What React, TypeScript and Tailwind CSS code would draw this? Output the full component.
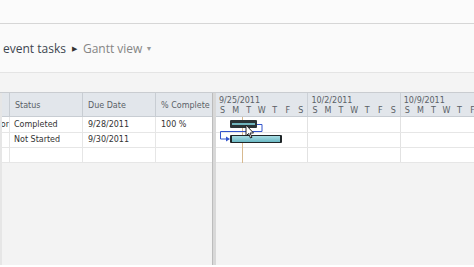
import React from 'react'

const days = ['S', 'M', 'T', 'W', 'T', 'F', 'S']
const weeks = ['9/25/2011', '10/2/2011', '10/9/2011']

const rows = [
  { name: 'Hire vendor', status: 'Completed', due: '9/28/2011', pct: '100 %', h: 'h-[16px]' },
  { name: '', status: 'Not Started', due: '9/30/2011', pct: '', h: 'h-[15px]' },
  { name: '', status: '', due: '', pct: '', h: 'h-[15px]' },
]

function Cursor() {
  return (
    <svg width="10" height="15" viewBox="0 0 10 15" className="absolute left-[29px] top-[7px]">
      <path d="M1 1 L1 12 L3.5 9.5 L5.5 14 L7 13.3 L5 9 L8.5 9 Z" fill="#fff" stroke="#222" strokeWidth="1" strokeLinejoin="round" />
    </svg>
  )
}

export default function App() {
  return (
    <div className="w-[474px] h-[267px] flex bg-white overflow-hidden" style={{ fontFamily: '"DejaVu Sans", Verdana, sans-serif' }}>
      <div className="flex-1 flex flex-col">
        {/* top strip */}
        <div className="h-[24px] bg-[#fbfbfb] border-b border-[#d6d6d6]" />

        {/* breadcrumb */}
        <div className="h-[49px] bg-[#fafafa] border-b border-[#e4e4e4] flex items-center pl-[3px] pt-[2px] text-[12px]" style={{ fontFamily: '"Open Sans", "Noto Sans", sans-serif' }}>
          <span className="text-[#3d4650]">event tasks</span>
          <span className="mx-[6px] text-[7px] text-[#333]">▶</span>
          <span className="text-[#858585]">Gantt view</span>
          <span className="ml-[3px] text-[7px] text-[#999]">▼</span>
        </div>

        {/* toolbar band */}
        <div className="h-[19px] bg-[#f4f4f4]" />

        {/* grid + gantt */}
        <div className="flex-1 flex border-t border-[#c9ccd0] text-[8px] pb-[2px] bg-white">
          {/* left grid */}
          <div className="w-[212px] flex flex-col bg-[#f3f3f3] border-l-[2px] border-[#e6e6e6]">
            <div className="h-[24px] flex bg-[#e2e6eb] border-b border-[#c8cdd3] text-[#5a5f66]">
              <div className="w-[8px] border-r border-[#c8cdd3]" />
              <div className="w-[73px] border-r border-[#c8cdd3] flex items-center pl-[5px] pt-[2px]">Status</div>
              <div className="w-[73px] border-r border-[#c8cdd3] flex items-center pl-[5px] pt-[2px]">Due Date</div>
              <div className="flex-1 flex items-center pl-[5px] pt-[2px] whitespace-nowrap overflow-hidden">% Complete</div>
            </div>
            {rows.map((r, i) => (
              <div key={i} className={`${r.h} flex bg-white border-b border-[#e6e6e6] text-[#333]`}>
                <div className="w-[8px] border-r border-[#e6e6e6] flex items-center justify-end overflow-hidden whitespace-nowrap">{r.name}</div>
                <div className="w-[73px] border-r border-[#e6e6e6] flex items-center pl-[4px]">{r.status}</div>
                <div className="w-[73px] border-r border-[#e6e6e6] flex items-center pl-[5px]">{r.due}</div>
                <div className="flex-1 flex items-center pl-[5px]">{r.pct}</div>
              </div>
            ))}
          </div>

          {/* splitter */}
          <div className="w-[4px] bg-[#d8d8d8] border-l border-[#bcbcbc]" />

          {/* gantt */}
          <div className="flex-1 flex flex-col bg-[#f3f3f3] border-r border-[#dcdcdc] overflow-hidden">
            <div className="h-[24px] flex flex-col bg-[#e2e6eb] border-b border-[#c8cdd3] text-[#5a5f66]">
              <div className="h-[13px] flex">
                {weeks.map(w => (
                  <div key={w} className="w-[92.4px] shrink-0 pl-[3px] pt-[3px] leading-[9px] border-r border-[#ccd1d7]">{w}</div>
                ))}
              </div>
              <div className="flex-1 flex">
                {weeks.map(w => (
                  <div key={w} className="w-[92.4px] shrink-0 flex border-r border-[#ccd1d7]">
                    {days.map((d, i) => (
                      <div key={i} className="w-[13.2px] text-center text-[8px] leading-[11px]">{d}</div>
                    ))}
                  </div>
                ))}
              </div>
            </div>
            <div className="relative flex flex-col">
              {rows.map((r, i) => (
                <div key={i} className={`${r.h} flex bg-white border-b border-[#e6e6e6]`}>
                  {weeks.map(w => (
                    <div key={w} className="w-[92.4px] shrink-0 border-r border-[#e2e2e2]" />
                  ))}
                </div>
              ))}
              {/* today line */}
              <div className="absolute left-[26px] top-0 h-[46px] w-px bg-[#d7b98f]" />
              {/* connector */}
              <svg className="absolute left-0 top-0" width="70" height="46">
                <path d="M41 7.5 H46 V14.5 H4.5 V22 H11" fill="none" stroke="#3355cc" strokeWidth="1" />
                <path d="M10 19.5 L14 22 L10 24.5 Z" fill="#3355cc" />
              </svg>
              {/* bar 1 */}
              <div className="absolute left-[14px] top-[3px] w-[27px] h-[8px] bg-[#2a3436] rounded-[1px] flex items-center px-[2px]">
                <div className="h-[2px] flex-1 bg-[#6fb5bd]" />
              </div>
              {/* bar 2 */}
              <div className="absolute left-[14px] top-[18px] w-[52px] h-[8px] bg-[#1f2628] rounded-[1px] flex items-center px-[2px]">
                <div className="h-[6px] flex-1 bg-gradient-to-b from-[#a8dde4] to-[#6ab8c3]" />
              </div>
              <Cursor />
            </div>
          </div>
        </div>
      </div>
      <div className="w-[3px] bg-[#5a5a5a]" />
    </div>
  )
}
